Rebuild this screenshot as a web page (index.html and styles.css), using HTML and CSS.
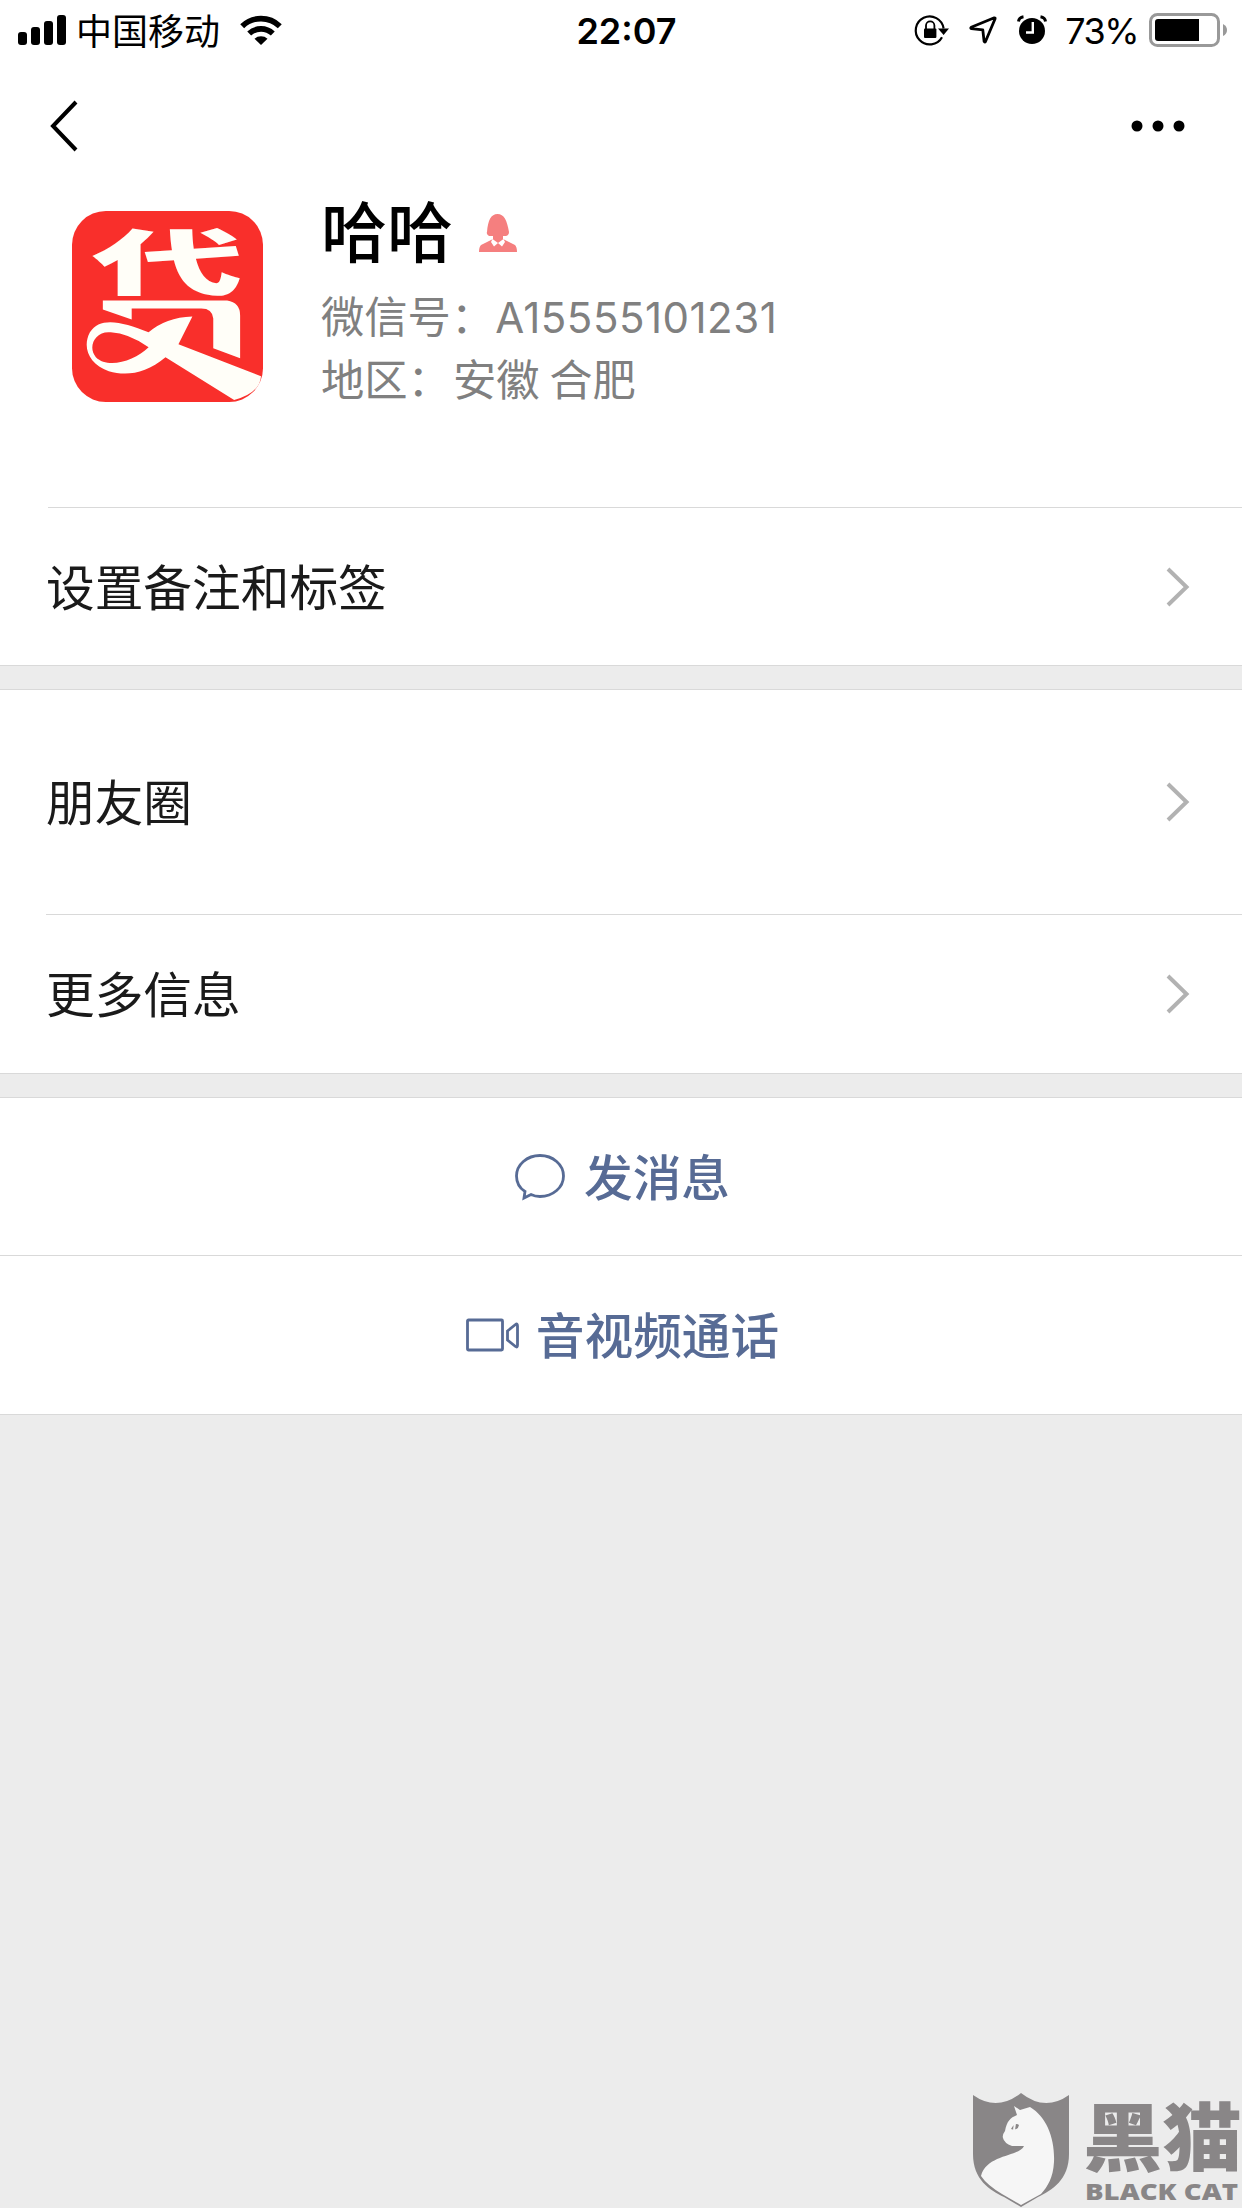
FILE: index.html
```html
<!DOCTYPE html>
<html lang="zh-CN">
<head>
    <meta charset="UTF-8">
    <meta name="viewport" content="width=device-width, initial-scale=1.0">
    <title>哈哈</title>
    <link rel="stylesheet" href="styles.css">
</head>
<body>
    <div class="status-bar">
        <div class="status-left">
            <svg class="signal" width="48" height="30" viewBox="0 0 48 30">
                <rect x="0" y="17" width="9" height="13" rx="3"/>
                <rect x="13" y="12" width="9" height="18" rx="3"/>
                <rect x="26" y="6" width="9" height="24" rx="3"/>
                <rect x="39" y="0" width="9" height="30" rx="3"/>
            </svg>
            <span class="carrier">中国移动</span>
            <svg class="wifi" width="42" height="30" viewBox="0 0 42 30">
                <path d="M2.2 11.2a27 27 0 0 1 37.6 0M9.2 18.6a17 17 0 0 1 23.6 0" fill="none" stroke="#000" stroke-width="5.6"/>
                <path d="M14.5 23.7a10 10 0 0 1 13 0L21 30z"/>
            </svg>
        </div>
        <div class="time">22:07</div>
        <div class="status-right">
            <svg width="34" height="30" viewBox="0 0 34 30">
                <path d="M27 22.2A14 14 0 1 1 28.6 13.5" fill="none" stroke="#000" stroke-width="2.2"/>
                <path d="M23 13.5h11l-5.4 6.5z"/>
                <rect x="9" y="13.5" width="12.4" height="9.5" rx="1"/>
                <path d="M11 14v-3.5a4.2 4.2 0 0 1 8.4 0V14" fill="none" stroke="#000" stroke-width="1.8"/>
            </svg>
            <svg class="location" width="28" height="28" viewBox="0 0 28 28">
                <path d="M25.3 1.8L2.2 11.3q-1 .8.2 1.3l11.4 1.2 1.3 11.6q.7 1.3 1.4.1L26.1 2.7q.2-1-.8-.9z" fill="none" stroke="#000" stroke-width="2.8" stroke-linejoin="round"/>
            </svg>
            <svg class="alarm" width="28" height="28" viewBox="0 0 28 28">
                <circle cx="14" cy="15" r="13"/>
                <path d="M.5 5.5Q1 1.5 5.5 .8M27.5 5.5Q27 1.5 22.5 .8" fill="none" stroke="#000" stroke-width="3"/>
                <path d="M14.8 6v10.5H8" fill="none" stroke="#fff" stroke-width="2.4"/>
            </svg>
            <span class="percent">73%</span>
            <svg class="battery" width="79" height="34" viewBox="0 0 79 34">
                <rect x="1.5" y="1.5" width="68" height="31" rx="7" fill="none" stroke="#999" stroke-width="3"/>
                <path d="M9 6h41v22H9q-3 0-3-3V9q0-3 3-3z"/>
                <path d="M74 11q4 2 4 6t-4 6z" fill="#999"/>
            </svg>
        </div>
    </div>

    <div class="nav">
        <svg width="28" height="52" viewBox="0 0 28 52">
            <path d="M26 2L3 26l23 24" fill="none" stroke="#000" stroke-width="4"/>
        </svg>
        <svg width="54" height="12" viewBox="0 0 54 12">
            <circle cx="6" cy="6" r="5.5"/>
            <circle cx="27" cy="6" r="5.5"/>
            <circle cx="48" cy="6" r="5.5"/>
        </svg>
    </div>

    <div class="profile">
        <svg class="avatar" width="191" height="191" viewBox="0 0 192 192">
            <rect width="192" height="192" rx="34" fill="#f92f2b"/>
            <text x="20" y="78" class="avatar-text" textLength="152" lengthAdjust="spacingAndGlyphs">代</text>
            <!-- bracket and ribbon -->
            <path d="M31 90H156Q169 92 169 105V148L142 138V108Q141 98 130 98H60V109L31 99z" fill="#fffef8"/>
            <path d="M163 190L94 147C74 164 54 166 37 161C17 154 10 137 18 122C28 106 50 111 77 122Q94 107 121 106L107 134L190 166Q189 183 163 190zM77 137Q57 123 39 122C24 120 15 136 24 147C36 159 63 151 77 137z" fill="#fffef8" fill-rule="evenodd"/>
        </svg>
        <div class="info">
            <div class="name-row">
                <span class="name">哈哈</span>
                <svg class="gender" width="38" height="38" viewBox="0 0 38 38" fill="#f57f7f">
                    <path d="M18.5 0C25 0 28 6 30 18Q30 21 27 22H24V25L36 31Q38 33 38 38H0Q0 33 2 31L14 25V22H10Q7 20 8 18C9 6 12 0 18.5 0z"/>
                    <path d="M13.5 25L19 29 15 32.5 12 28zM24.5 25L19 29 23 32.5 26 28z" fill="#fff"/>
                </svg>
            </div>
            <div class="detail">微信号：<span class="wxid">A15555101231</span></div>
            <div class="detail">地区：<span class="region">安徽 合肥</span></div>
        </div>
    </div>

    <div class="group first">
        <div class="cell">
            <span>设置备注和标签</span>
            <svg class="arrow" width="24" height="40" viewBox="0 0 24 40"><path d="M2 2l18.5 18L2 38"/></svg>
        </div>
    </div>

    <div class="group">
        <div class="cell tall">
            <span>朋友圈</span>
            <svg class="arrow" width="24" height="40" viewBox="0 0 24 40"><path d="M2 2l18.5 18L2 38"/></svg>
        </div>
        <div class="line"></div>
        <div class="cell more">
            <span>更多信息</span>
            <svg class="arrow" width="24" height="40" viewBox="0 0 24 40"><path d="M2 2l18.5 18L2 38"/></svg>
        </div>
    </div>

    <div class="group">
        <div class="action">
            <svg class="icon-chat" width="50" height="46" viewBox="0 0 50 46">
                <path d="M25 1.5C38 1.5 48.5 10.5 48.5 22S38 42.5 25 42.5Q20 42.5 16 40.5L9 44 10 37.5C4.5 34 1.5 28.5 1.5 22 1.5 10.5 12 1.5 25 1.5z"/>
            </svg>
            <span>发消息</span>
        </div>
        <div class="action call">
            <svg class="icon-video" width="54" height="34" viewBox="0 0 54 34">
                <rect x="1.5" y="2" width="35" height="30" rx="1"/>
                <path d="M41.5 13L49.5 6.5Q51.5 5 51.5 8V27Q51.5 30 49.5 28.5L41.5 22z"/>
            </svg>
            <span>音视频通话</span>
        </div>
    </div>

    <div class="watermark">
        <svg width="98" height="116" viewBox="0 0 98 116">
            <path d="M1 3Q25 20 49 1Q73 20 97 3V62C97 88 80 98 66 105L49 115 32 105C18 98 1 88 1 62z" fill="#898687"/>
            <path d="M42 14L48 18 58 15C75 25 83 47 82 70C81 86 76 94 69 102L49 113 30 102Q15 93 9 84C15 62 47 65 52 54H40Q32 51 31 46Q30 43 33 39C35 29 38 26 45 23z" fill="#f6f6f6"/>
            <path d="M39 37Q43 30 47 33Q46 39 39 37z" fill="#898687"/>
            <path d="M43 31l-1 7" stroke="#f6f6f6" stroke-width="2"/>
        </svg>
        <svg class="brand" width="156" height="116" viewBox="0 0 156 116">
            <text x="-2" y="73" class="brand-cn" textLength="159" lengthAdjust="spacingAndGlyphs">黑猫</text>
            <text x="0" y="108" class="brand-en" textLength="153" lengthAdjust="spacingAndGlyphs">BLACK CAT</text>
        </svg>
    </div>
</body>
</html>
```

FILE: styles.css
```css
* {
    box-sizing: border-box;
}

body {
    margin: 0;
    height: 2208px;
    overflow: hidden;
    position: relative;
    background-color: #ececec;
    font-family: "Noto Sans CJK SC", sans-serif;
    color: #1a1a1a;
}

svg {
    display: block;
    flex-shrink: 0;
    overflow: visible;
}

/* status bar */
.status-bar {
    display: grid;
    grid-template-columns: 1fr auto 1fr;
    align-items: center;
    height: 60px;
    padding: 0 14px 0 18px;
    background-color: #fff;
    color: #000;
    font-size: 36px;
    line-height: 60px;
}

.status-left,
.status-right {
    display: flex;
    align-items: center;
}

.status-right {
    justify-content: flex-end;
}

.carrier {
    margin: 0 20px 0 10px;
    height: 60px;
    line-height: 58px;
}

.time,
.percent {
    font-family: Inter, sans-serif;
    height: 60px;
    padding-top: 1px;
}

.time {
    font-weight: 600;
    margin-left: 7px;
}

.location {
    margin-left: 20px;
}

.alarm {
    margin-left: 21px;
}

.percent {
    margin-left: 19px;
    letter-spacing: -1.5px;
}

.battery {
    margin-left: 11px;
}

/* nav */
.nav {
    display: flex;
    justify-content: space-between;
    align-items: center;
    height: 132px;
    padding: 0 57px 0 50px;
    background-color: #fff;
}

/* profile */
.profile {
    display: flex;
    height: 315px;
    padding: 19px 0 0 72px;
    background-color: #fff;
}

.avatar-text {
    font-size: 72px;
    font-weight: 900;
    fill: #fffef8;
}

.info {
    margin-left: 58px;
}

.name-row {
    display: flex;
    align-items: center;
    gap: 26px;
    height: 74px;
    margin-top: -20px;
    color: #000;
}

.name {
    font-size: 66px;
    font-weight: 500;
    line-height: 74px;
}

.gender {
    margin-top: 10px;
}

.detail {
    font-size: 43.3px;
    line-height: 63px;
    height: 63px;
    color: #808080;
    white-space: nowrap;
}

.name-row + .detail {
    margin-top: 18px;
}

.wxid {
    font-family: Inter, sans-serif;
    font-size: 42px;
    letter-spacing: 0.5px;
    margin-left: 1px;
}

.region {
    margin-left: 2px;
}

/* cells */
.group {
    background-color: #fff;
    border-top: 1px solid #d9d9d9;
    border-bottom: 1px solid #d9d9d9;
    margin-bottom: 23px;
}

.first {
    border-top: none;
}

.first::before {
    content: "";
    display: block;
    height: 1px;
    margin-left: 48px;
    background-color: #d9d9d9;
}

.cell {
    display: flex;
    justify-content: space-between;
    align-items: center;
    height: 157px;
    padding: 0 52px 0 46px;
    font-size: 48.7px;
}

.cell span,
.action span {
    padding-bottom: 4px;
}

.tall {
    height: 224px;
}

.more {
    height: 158px;
}

.line {
    height: 1px;
    margin-left: 46px;
    background-color: #d9d9d9;
}

.arrow path {
    fill: none;
    stroke: #b2b2b2;
    stroke-width: 4;
}

.action {
    display: flex;
    justify-content: center;
    align-items: center;
    gap: 19px;
    height: 157px;
    padding-left: 3px;
    font-size: 48.7px;
    font-weight: 500;
    color: #576b95;
}

.action svg {
    fill: none;
    stroke: #576b95;
    stroke-width: 2.8;
}

.call {
    height: 159px;
    gap: 16px;
    border-top: 1px solid #d9d9d9;
}

/* watermark in the corner */
.watermark {
    position: absolute;
    right: 1px;
    bottom: 0;
    display: flex;
    gap: 15px;
    height: 116px;
}

.brand {
    fill: #898687;
}

.brand-cn {
    font-size: 74px;
    font-weight: 900;
}

.brand-en {
    font-family: "Open Sans", sans-serif;
    font-size: 23px;
    font-weight: 800;
}
```
